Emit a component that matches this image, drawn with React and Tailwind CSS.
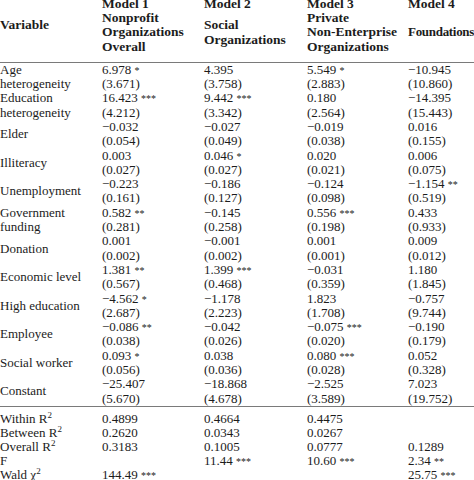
const rows = [
  { label: ["Age", "heterogeneity"], vals: [["6.978 *", "(3.671)"], ["4.395", "(3.758)"], ["5.549 *", "(2.883)"], ["\u221210.945", "(10.860)"]] },
  { label: ["Education", "heterogeneity"], vals: [["16.423 ***", "(4.212)"], ["9.442 ***", "(3.342)"], ["0.180", "(2.564)"], ["\u221214.395", "(15.443)"]] },
  { label: ["Elder"], vals: [["\u22120.032", "(0.054)"], ["\u22120.027", "(0.049)"], ["\u22120.019", "(0.038)"], ["0.016", "(0.155)"]] },
  { label: ["Illiteracy"], vals: [["0.003", "(0.027)"], ["0.046 *", "(0.027)"], ["0.020", "(0.021)"], ["0.006", "(0.075)"]] },
  { label: ["Unemployment"], vals: [["\u22120.223", "(0.161)"], ["\u22120.186", "(0.127)"], ["\u22120.124", "(0.098)"], ["\u22121.154 **", "(0.519)"]] },
  { label: ["Government", "funding"], vals: [["0.582 **", "(0.281)"], ["\u22120.145", "(0.258)"], ["0.556 ***", "(0.198)"], ["0.433", "(0.933)"]] },
  { label: ["Donation"], vals: [["0.001", "(0.002)"], ["\u22120.001", "(0.002)"], ["0.001", "(0.001)"], ["0.009", "(0.012)"]] },
  { label: ["Economic level"], vals: [["1.381 **", "(0.567)"], ["1.399 ***", "(0.468)"], ["\u22120.031", "(0.359)"], ["1.180", "(1.845)"]] },
  { label: ["High education"], vals: [["\u22124.562 *", "(2.687)"], ["\u22121.178", "(2.223)"], ["1.823", "(1.708)"], ["\u22120.757", "(9.744)"]] },
  { label: ["Employee"], vals: [["\u22120.086 **", "(0.038)"], ["\u22120.042", "(0.026)"], ["\u22120.075 ***", "(0.020)"], ["\u22120.190", "(0.179)"]] },
  { label: ["Social worker"], vals: [["0.093 *", "(0.056)"], ["0.038", "(0.036)"], ["0.080 ***", "(0.028)"], ["0.052", "(0.328)"]] },
  { label: ["Constant"], vals: [["\u221225.407", "(5.670)"], ["\u221218.868", "(4.678)"], ["\u22122.525", "(3.589)"], ["7.023", "(19.752)"]] },
];

const Sq = () => <sup className="text-[9px] leading-none">2</sup>;

const stats = [
  { label: <>Within R<Sq /></>, vals: ["0.4899", "0.4664", "0.4475", ""] },
  { label: <>Between R<Sq /></>, vals: ["0.2620", "0.0343", "0.0267", ""] },
  { label: <>Overall R<Sq /></>, vals: ["0.3183", "0.1005", "0.0777", "0.1289"] },
  { label: "F", vals: ["", "11.44 ***", "10.60 ***", "2.34 **"] },
  { label: <>Wald χ<Sq /></>, vals: ["144.49 ***", "", "", "25.75 ***"] },
];

const cols = "grid grid-cols-[102px_102px_103px_101px_1fr]";

function Stars({ text }) {
  const i = text.indexOf(" *");
  if (i < 0) return text;
  return (
    <>
      {text.slice(0, i)}{" "}
      <span className="text-[10px] leading-none">{text.slice(i + 1)}</span>
    </>
  );
}

export default function App() {
  return (
    <div className="w-[474px] h-[480px] overflow-hidden bg-white text-[#1c1c1c] text-[13px] font-['Liberation_Serif',serif]">
      <div className={`${cols} -mt-[3px] pb-[8px] leading-[14.2px] text-[13.5px] font-bold border-b border-[#7a7a7a]`}>
        <div className="flex items-center">Variable</div>
        <div>
          <div>Model 1</div>
          <div>Nonprofit</div>
          <div>Organizations</div>
          <div>Overall</div>
        </div>
        <div className="flex flex-col">
          <div>Model 2</div>
          <div className="flex-1 flex flex-col justify-center">
            <div>Social</div>
            <div>Organizations</div>
          </div>
        </div>
        <div>
          <div>Model 3</div>
          <div>Private</div>
          <div>Non-Enterprise</div>
          <div>Organizations</div>
        </div>
        <div className="flex flex-col">
          <div>Model 4</div>
          <div className="flex-1 flex flex-col justify-center">
            <div className="whitespace-nowrap text-[13px] tracking-[-0.3px]">Foundations</div>
          </div>
        </div>
      </div>

      <div className="border-b border-[#7a7a7a] leading-[14.3px]">
        {rows.map((r, k) => (
          <div key={k} className={cols}>
            <div className="flex flex-col justify-center">
              {r.label.map((l) => (
                <div key={l} className="h-[14.3px]">{l}</div>
              ))}
            </div>
            {r.vals.map((v, j) => (
              <div key={j}>
                <div className="h-[14.3px]"><Stars text={v[0]} /></div>
                <div className="h-[14.3px]">{v[1]}</div>
              </div>
            ))}
          </div>
        ))}
      </div>

      <div className="pt-[5px] leading-[14px]">
        {stats.map((s, k) => (
          <div key={k} className={`${cols} h-[14px]`}>
            <div className="whitespace-nowrap">{s.label}</div>
            {s.vals.map((v, j) => (
              <div key={j} className="whitespace-nowrap">{v ? <Stars text={v} /> : "\u00a0"}</div>
            ))}
          </div>
        ))}
      </div>
    </div>
  );
}
